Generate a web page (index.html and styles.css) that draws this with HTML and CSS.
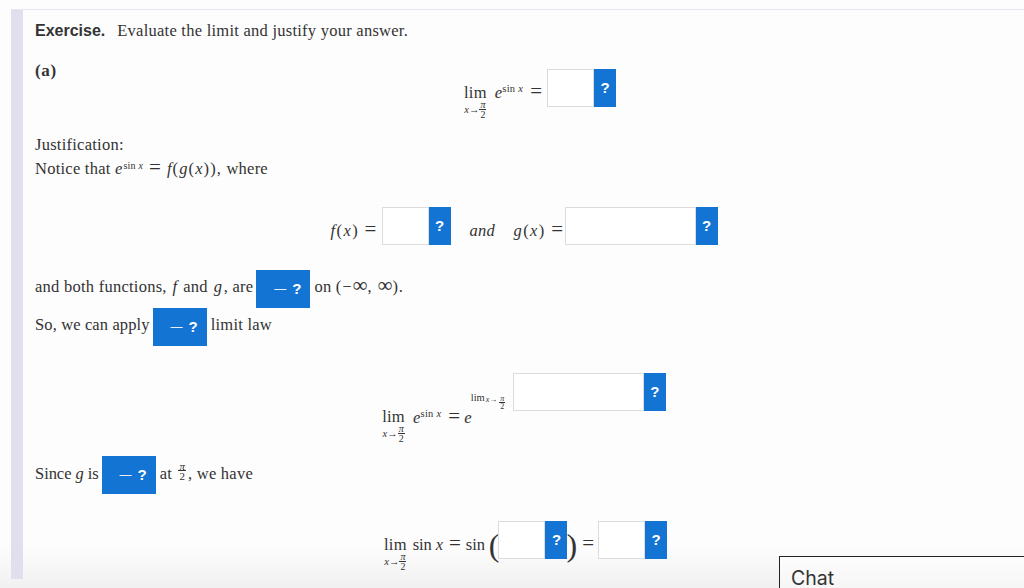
FILE: index.html
```html
<!DOCTYPE html>
<html lang="en">
<head>
<meta charset="utf-8">
<title>Exercise</title>
<link rel="stylesheet" href="styles.css">
</head>
<body>
<main class="sheet">
  <div class="content">
    <p class="line"><strong class="sans">Exercise.</strong><span class="lead">Evaluate the limit and justify your answer.</span></p>

    <div class="part">
      <strong class="part-label">(a)</strong>
      <div class="math part-math">
        <span class="lim m-t13"><span class="lim-word">lim</span><span class="lim-sub"><i>x</i>→<span class="frac"><i>π</i><span>2</span></span></span></span>
        <span class="expr m-t12"><i class="e">e</i><sup class="sup">sin <i>x</i></sup><span class="op eq">=</span></span>
        <span class="answer"><span class="field w47"></span><span class="help">?</span></span>
      </div>
    </div>

    <p class="line gap-just">Justification:</p>
    <p class="line">Notice that <span class="inl"><i>e</i><sup class="sup-small">sin <i>x</i></sup><span class="op inl-op">=</span><i>f</i>(<i>g</i>(<i>x</i>)),</span> where</p>

    <div class="math center gap-f">
      <span class="expr m-t12 fx"><i>f</i>(<i>x</i>) <span class="op">=</span></span>
      <span class="answer"><span class="field w47"></span><span class="help">?</span></span>
      <span class="expr m-t12 and"><i>and</i></span>
      <span class="expr m-t12 gx"><i>g</i>(<i>x</i>) <span class="op">=</span></span>
      <span class="answer"><span class="field w131"></span><span class="help">?</span></span>
    </div>

    <div class="row gap-both">and both functions, <i class="var">f</i> and <i class="var">g</i>, are<span class="select"><span class="dash">—</span><span class="mark">?</span></span>on <span class="interval">(−<span class="inf">∞</span>, <span class="inf">∞</span>).</span></div>
    <div class="row"><span class="tight">So, we can apply</span><span class="select"><span class="dash">—</span><span class="mark">?</span></span>limit law</div>

    <div class="math center gap-comp">
      <span class="lim m-t33"><span class="lim-word">lim</span><span class="lim-sub"><i>x</i>→<span class="frac"><i>π</i><span>2</span></span></span></span>
      <span class="expr m-t33"><i class="e">e</i><sup class="sup">sin <i>x</i></sup><span class="op eq">=</span><i class="e-end">e</i></span>
      <span class="exp-lim"><span>lim</span><span class="exp-sub"><i>x</i>→<span class="frac tiny"><i>π</i><span>2</span></span></span></span>
      <span class="answer"><span class="field w131"></span><span class="help">?</span></span>
    </div>

    <div class="row row-low"><span class="tighter">Since <i>g</i> is</span><span class="select"><span class="dash">—</span><span class="mark">?</span></span>at <span class="frac inline"><i>π</i><span>2</span></span>, we have</div>

    <div class="math center gap-last">
      <span class="lim m-t13"><span class="lim-word">lim</span><span class="lim-sub"><i>x</i>→<span class="frac"><i>π</i><span>2</span></span></span></span>
      <span class="expr m-t12 sinx">sin <i>x</i><span class="op eq-mid">=</span>sin</span>
      <span class="paren open">(</span>
      <span class="answer"><span class="field w47"></span><span class="help">?</span></span>
      <span class="paren close">)</span>
      <span class="expr m-t12 eq-last"><span class="op">=</span></span>
      <span class="answer"><span class="field w47"></span><span class="help">?</span></span>
    </div>
  </div>
</main>
<aside class="chat">Chat</aside>
</body>
</html>
```
FILE: styles.css
```css
html, body {
  margin: 0;
  height: 588px;
  overflow: hidden;
}
body {
  position: relative;
  background: linear-gradient(#fdfdfd 0, #fdfdfd 545px, #f1f1f1 588px);
  color: #333;
  font: 16.5px/24px "Liberation Serif", serif;
}
.sheet {
  margin: 9px 0 0 11px;
  border-top: 1px solid #e6e6ee;
}
.content {
  height: 569px;
  box-sizing: border-box;
  padding: 9px 11px 0 12px;
  border-left: 12px solid #dfdfee;
  letter-spacing: .25px;
}
p { margin: 0; }
.line { height: 24px; }
.sans {
  font: bold 16px/24px "Liberation Sans", sans-serif;
  letter-spacing: 0;
}
.lead { margin-left: 12px; }
.part { display: flex; margin-top: 16px; height: 48px; }
.part-label { width: 429px; font-size: 17px; letter-spacing: .7px; }
.math { display: flex; align-items: flex-start; }
.part-math { margin-top: 10px; }
.center { justify-content: center; }
.gap-just { margin-top: 26px; }
.gap-f { margin-top: 26px; height: 38px; }
.gap-both { margin-top: 25px; }
.gap-comp { margin-top: 27px; height: 83px; }
.gap-last { margin: 27px 0 0 3px; }
.m-t12 { margin-top: 12px; }
.m-t13 { margin-top: 13px; }
.m-t33 { margin-top: 33px; }
.expr { white-space: pre; }
.op { font-size: 21px; line-height: 0; letter-spacing: 0; }
.inl { letter-spacing: 1.1px; }
.inl-op { margin: 0 6px; }
.fx { width: 51px; letter-spacing: 1.4px; }
.and { width: 26px; margin: 12px 18px 0 19px; }
.gx { width: 51px; letter-spacing: 1.4px; }
.lim {
  display: flex;
  flex-direction: column;
  align-items: center;
}
.lim-word { height: 15px; line-height: 22px; }
.lim-sub {
  display: flex;
  align-items: center;
  margin-top: 4px;
  font-size: 10.5px;
  line-height: 12px;
  letter-spacing: 0;
}
.frac {
  display: inline-flex;
  flex-direction: column;
  align-items: center;
  font-size: 10px;
  line-height: 9px;
  letter-spacing: 0;
}
.frac i { border-bottom: 1px solid #333; padding: 0 1px; line-height: 8px; }
.frac.tiny { font-size: 8px; line-height: 8px; margin-left: 2px; }
.frac.tiny i { line-height: 7px; }
.frac.inline { margin: 0 2px 0 2px; vertical-align: middle; font-size: 11px; line-height: 11px; }
.e { margin-left: 8px; }
.e-end { margin-left: -1px; }
.sup { font-size: 10.5px; line-height: 0; position: relative; top: -2px; vertical-align: 4px; }
.sup-small { font-size: 10px; line-height: 0; vertical-align: 5px; letter-spacing: .2px; }
.eq { margin: 0 5px 0 7px; }
.eq-mid { margin: 0 5px 0 6px; }
.answer { display: flex; height: 38px; flex: none; }
.field {
  box-sizing: border-box;
  height: 38px;
  border: 1px solid #dcdcdc;
  background: #fff;
}
.w47 { width: 47px; }
.w131 { width: 131px; }
.help {
  width: 22px;
  background: #1474d4;
  color: #fff;
  font: bold 15px/37px "Liberation Sans", sans-serif;
  letter-spacing: 0;
  text-align: center;
}
.row {
  display: flex;
  align-items: flex-start;
  box-sizing: border-box;
  height: 38px;
  padding-top: 5px;
  white-space: pre;
  --lift: -5px;
}
.row-low { padding-top: 6px; --lift: -6px; }
.var { margin: 0 1.5px; }
.tight { letter-spacing: .12px; }
.tighter { letter-spacing: -.05px; }
.interval { letter-spacing: .9px; }
.inf { font-size: 21px; line-height: 0; letter-spacing: 0; }
.select {
  display: flex;
  justify-content: flex-end;
  align-items: center;
  box-sizing: border-box;
  width: 54px;
  height: 38px;
  margin: var(--lift) 4px 0 3px;
  padding-right: 9px;
  background: #1474d4;
  color: #e8eefc;
  font: bold 15px/38px "Liberation Sans", sans-serif;
  letter-spacing: 0;
}
.dash { font-weight: normal; font-size: 12px; margin-right: 6px; }
.mark { color: #fff; }
.exp-lim {
  display: flex;
  align-items: flex-start;
  width: 42px;
  margin: 18px 0 0 -1px;
  font-size: 10.5px;
  line-height: 14px;
  letter-spacing: 0;
}
.exp-sub {
  display: flex;
  align-items: flex-start;
  font-size: 8px;
  line-height: 10px;
  margin: 4px 0 0 1px;
}
.sinx { margin-left: 6px; letter-spacing: -.1px; }
.paren {
  font-size: 32px;
  line-height: 38px;
  font-weight: normal;
  letter-spacing: 0;
  margin-top: 5px;
}
.paren.open { margin: 5px -1px 0 4px; }
.paren.close { margin: 5px -1px 0 -1px; }
.eq-last { margin: 12px 4px 0 6px; }
.chat {
  position: absolute;
  left: 779px;
  top: 556px;
  right: -3px;
  height: 40px;
  box-sizing: border-box;
  border: 1px solid #222;
  padding: 9px 11px;
  background: linear-gradient(#fdfdfd, #f4f4f4);
  color: #333;
  font: 19.5px/24px "Inter", "Liberation Sans", sans-serif;
}
```
